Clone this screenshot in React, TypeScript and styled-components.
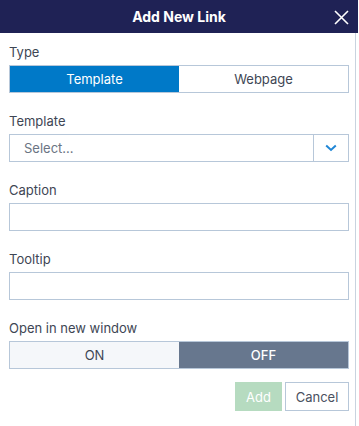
import React, { useState } from "react";
import styled, { createGlobalStyle } from "styled-components";

const Global = createGlobalStyle`
  html, body { margin: 0; padding: 0; background: #ffffff; }
  body { font-family: Inter, "Noto Sans", Arial, sans-serif; -webkit-font-smoothing: antialiased; }
  * { box-sizing: border-box; }
`;

const Dialog = styled.div`
  width: 358px;
  min-height: 426px;
  display: flex;
  flex-direction: column;
  background: #ffffff;
`;

const Header = styled.div`
  height: 33px;
  flex: none;
  background: #1f2255;
  color: #ffffff;
  display: flex;
  align-items: center;
  justify-content: center;
  position: relative;
  font-size: 14px;
  font-weight: 700;
`;

const Close = styled.button`
  position: absolute;
  right: 9px;
  top: 9px;
  width: 16px;
  height: 16px;
  padding: 0;
  border: none;
  background: transparent;
  display: flex;
  align-items: center;
  justify-content: center;
  cursor: pointer;
`;

const Body = styled.div`
  flex: 1;
  width: 356px;
  border-right: 1px solid #c9d3df;
  padding: 11px 0 13px 9px;
  display: flex;
  flex-direction: column;
  gap: 20px;
`;

const Field = styled.div`
  display: flex;
  flex-direction: column;
  gap: 5px;
  width: 340px;
`;

const Label = styled.label`
  font-size: 13px;
  line-height: 16px;
  color: #3e4654;
`;

const Segmented = styled.div`
  display: flex;
  height: 28px;
  border: 1px solid #b7c7d9;
`;

const Segment = styled.button<{ $active: boolean; $variant: "blue" | "slate" }>`
  flex: 1;
  border: none;
  margin: 0;
  padding: 0;
  font-family: inherit;
  font-size: 13px;
  cursor: pointer;
  background: ${(p) =>
    p.$active ? (p.$variant === "blue" ? "#0079c8" : "#67778e") : p.$variant === "blue" ? "#ffffff" : "#f5f7fa"};
  color: ${(p) => (p.$active ? "#ffffff" : "#3e4654")};
  font-weight: ${(p) => (p.$active && p.$variant === "slate" ? 500 : 400)};
`;

const SelectBox = styled.div`
  display: flex;
  height: 28px;
  border: 1px solid #b7c7d9;
`;

const SelectText = styled.div`
  flex: 1;
  display: flex;
  align-items: center;
  padding-left: 14px;
  font-size: 13px;
  color: #6b7483;
`;

const SelectButton = styled.div`
  width: 35px;
  border-left: 1px solid #b7c7d9;
  display: flex;
  align-items: center;
  justify-content: center;
`;

const Input = styled.input`
  height: 28px;
  border: 1px solid #b7c7d9;
  padding: 0 8px;
  font-family: inherit;
  font-size: 13px;
  outline: none;
`;

const Actions = styled.div`
  display: flex;
  justify-content: flex-end;
  gap: 3px;
  width: 340px;
  margin-top: -7px;
`;

const Button = styled.button<{ $primary?: boolean }>`
  height: 29px;
  padding: 0;
  width: ${(p) => (p.$primary ? "47px" : "64px")};
  font-family: inherit;
  font-size: 13px;
  cursor: pointer;
  border: ${(p) => (p.$primary ? "1px solid #b6dbc0" : "1px solid #b7c7d9")};
  background: ${(p) => (p.$primary ? "#b6dbc0" : "#ffffff")};
  color: ${(p) => (p.$primary ? "#ffffff" : "#4a5160")};
`;

export default function App() {
  const [type, setType] = useState<"template" | "webpage">("template");
  const [newWin, setNewWin] = useState(false);
  return (
    <>
      <Global />
      <Dialog>
        <Header>
          Add New Link
          <Close aria-label="Close">
            <svg width="15" height="15" viewBox="0 0 15 15">
              <path d="M1 1L14 14M14 1L1 14" stroke="#ffffff" strokeWidth="1.6" fill="none" />
            </svg>
          </Close>
        </Header>
        <Body>
          <Field>
            <Label>Type</Label>
            <Segmented>
              <Segment $variant="blue" $active={type === "template"} onClick={() => setType("template")}>
                Template
              </Segment>
              <Segment $variant="blue" $active={type === "webpage"} onClick={() => setType("webpage")}>
                Webpage
              </Segment>
            </Segmented>
          </Field>
          <Field>
            <Label>Template</Label>
            <SelectBox>
              <SelectText>Select...</SelectText>
              <SelectButton>
                <svg width="12" height="8" viewBox="0 0 12 8">
                  <path d="M1.2 1.5L6 6L10.8 1.5" stroke="#1f86d6" strokeWidth="2" fill="none" />
                </svg>
              </SelectButton>
            </SelectBox>
          </Field>
          <Field>
            <Label>Caption</Label>
            <Input />
          </Field>
          <Field>
            <Label>Tooltip</Label>
            <Input />
          </Field>
          <Field>
            <Label>Open in new window</Label>
            <Segmented>
              <Segment $variant="slate" $active={newWin} onClick={() => setNewWin(true)}>
                ON
              </Segment>
              <Segment $variant="slate" $active={!newWin} onClick={() => setNewWin(false)}>
                OFF
              </Segment>
            </Segmented>
          </Field>
          <Actions>
            <Button $primary>Add</Button>
            <Button>Cancel</Button>
          </Actions>
        </Body>
      </Dialog>
    </>
  );
}
